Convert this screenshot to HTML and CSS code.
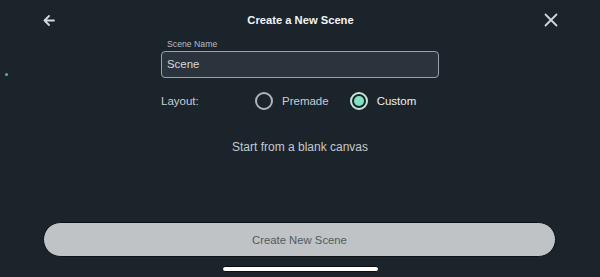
FILE: index.html
```html
<!DOCTYPE html>
<html>
<head>
<meta charset="utf-8">
<link rel="stylesheet" href="styles.css">
</head>
<body>
<div class="dot"></div>
<header class="header">
  <div class="hdr-left">
    <svg class="icon-back" width="12" height="11" viewBox="0 0 12 11"><path d="M11 5.5H1.5M6 1L1.5 5.5L6 10" fill="none" stroke="#d6d9dc" stroke-width="1.8" stroke-linecap="round" stroke-linejoin="round"/></svg>
  </div>
  <h1 class="title">Create a New Scene</h1>
  <div class="hdr-right">
    <svg class="icon-close" width="14" height="14" viewBox="0 0 14 14"><path d="M1.5 1.5L12.5 12.5M12.5 1.5L1.5 12.5" fill="none" stroke="#d4d7d9" stroke-width="1.8" stroke-linecap="round"/></svg>
  </div>
</header>
<main class="form">
  <label class="field-label">Scene Name</label>
  <div class="input">Scene</div>
  <div class="layout-row">
    <span class="layout-label">Layout:</span>
    <span class="option"><span class="radio"></span><span class="opt-text">Premade</span></span>
    <span class="option option-custom"><span class="radio radio-on"><span class="radio-dot"></span></span><span class="opt-text">Custom</span></span>
  </div>
  <p class="hint">Start from a blank canvas</p>
</main>
<div class="btn-wrap">
  <button class="create-btn">Create New Scene</button>
</div>
<div class="home-indicator"></div>
</body>
</html>
```
FILE: styles.css
```css
html, body {
  margin: 0;
  padding: 0;
}
body {
  width: 600px;
  height: 277px;
  background: #1b232b;
  font-family: "Liberation Sans", Arial, sans-serif;
  overflow: hidden;
  position: relative;
}
.dot {
  position: absolute;
  left: 5px;
  top: 73px;
  width: 3px;
  height: 3px;
  border-radius: 50%;
  background: #45c95e;
}
.header {
  display: grid;
  grid-template-columns: 1fr auto 1fr;
  align-items: center;
  height: 39px;
  padding: 0 42px 0 43px;
}
.hdr-left, .hdr-right {
  display: flex;
  align-items: center;
}
.hdr-right {
  justify-content: flex-end;
}
.icon-back {
  display: block;
  margin-top: 1px;
}
.icon-close {
  display: block;
  margin-top: 1px;
}
.title {
  margin: 0;
  font-size: 11.2px;
  font-weight: bold;
  color: #f3f4f5;
  line-height: 14px;
  margin-top: 1px;
}
.form {
  width: 278px;
  margin: 0 auto;
  display: flex;
  flex-direction: column;
}
.field-label {
  display: block;
  font-size: 8.7px;
  line-height: 10px;
  color: #b9bdc1;
  padding-left: 6px;
}
.input {
  margin-top: 2px;
  height: 27px;
  box-sizing: border-box;
  border: 1.5px solid #9ba1a6;
  border-radius: 4px;
  background: #2b343c;
  padding-left: 5px;
  font-size: 11.4px;
  line-height: 24px;
  color: #d6d9db;
}
.layout-row {
  margin-top: 14px;
  height: 18px;
  display: flex;
  align-items: center;
  font-size: 11.5px;
  color: #c9cdd0;
}
.layout-label {
  width: 94px;
}
.option {
  display: flex;
  align-items: center;
  gap: 9px;
}
.option-custom {
  margin-left: 21px;
  color: #eef0f1;
}
.radio {
  width: 18px;
  height: 18px;
  box-sizing: border-box;
  border: 2px solid #b1b5b9;
  border-radius: 50%;
  display: flex;
  align-items: center;
  justify-content: center;
}
.radio-on {
  border-color: #c4e8da;
}
.radio-dot {
  width: 10px;
  height: 10px;
  border-radius: 50%;
  background: #7fe2c2;
}
.hint {
  margin: 29px 0 0;
  text-align: center;
  font-size: 12px;
  line-height: 16px;
  color: #c6cacd;
}
.btn-wrap {
  margin: 67px 44px 0 43px;
}
.create-btn {
  display: block;
  width: 100%;
  height: 35px;
  box-sizing: border-box;
  border: 1px solid #0d1115;
  border-radius: 18px;
  background: #bfc3c5;
  font-family: "Liberation Sans", Arial, sans-serif;
  font-size: 11.3px;
  color: #51595f;
  padding: 0;
}
.home-indicator {
  width: 155px;
  height: 4px;
  margin: 9px auto 0;
  background: #ffffff;
  border: 1px solid #0b0e11;
  border-radius: 3px;
}
```
